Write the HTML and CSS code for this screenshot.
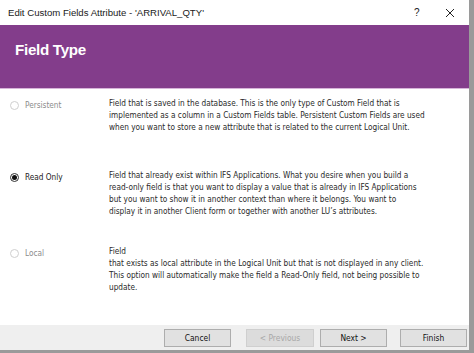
FILE: index.html
```html
<!DOCTYPE html>
<html>
<head>
<meta charset="utf-8">
<link rel="stylesheet" href="styles.css">
</head>
<body>
<div class="window">
  <div class="titlebar">
    <span class="title">Edit Custom Fields Attribute - 'ARRIVAL_QTY'</span>
    <span class="tb-help">?</span>
    <span class="tb-close">
      <svg width="10" height="10" viewBox="0 0 10 10"><path d="M1 1 L9 9 M9 1 L1 9" stroke="#222" stroke-width="1" fill="none"/></svg>
    </span>
  </div>
  <div class="header"><span class="header-title">Field Type</span></div>
  <div class="content">
    <div class="row row-1">
      <div class="opt disabled"><span class="radio"></span><span class="lbl">Persistent</span></div>
      <div class="desc">Field that is saved in the database. This is the only type of Custom Field that is<br>implemented as a column in a Custom Fields table. Persistent Custom Fields are used<br>when you want to store a new attribute that is related to the current Logical Unit.</div>
    </div>
    <div class="row row-2">
      <div class="opt"><span class="radio checked"></span><span class="lbl">Read Only</span></div>
      <div class="desc">Field that already exist within IFS Applications. What you desire when you build a<br>read-only field is that you want to display a value that is already in IFS Applications<br>but you want to show it in another context than where it belongs. You want to<br>display it in another Client form or together with another LU’s attributes.</div>
    </div>
    <div class="row row-3">
      <div class="opt disabled"><span class="radio"></span><span class="lbl">Local</span></div>
      <div class="desc">Field<br>that exists as local attribute in the Logical Unit but that is not displayed in any client.<br>This option will automatically make the field a Read-Only field, not being possible to<br>update.</div>
    </div>
  </div>
  <div class="footer">
    <button class="btn btn-cancel">Cancel</button>
    <button class="btn btn-prev" disabled>&lt; Previous</button>
    <button class="btn btn-next">Next &gt;</button>
    <button class="btn btn-finish">Finish</button>
  </div>
</div>
</body>
</html>
```
FILE: styles.css
```css
html, body { margin: 0; padding: 0; }
body {
  width: 474px;
  height: 353px;
  background: #9a9a9a;
  overflow: hidden;
  font-family: "Liberation Sans", Arial, sans-serif;
}
.window {
  width: 469px;
  height: 350px;
  display: flex;
  flex-direction: column;
  background: #fff;
}
.titlebar {
  height: 25px;
  flex: none;
  display: flex;
  align-items: center;
  background: #fff;
}
.title {
  font-size: 9.6px;
  color: #1a1a1a;
  padding-left: 8px;
  flex: 1;
  white-space: nowrap;
}
.tb-help {
  font-size: 10px;
  color: #222;
  width: 10px;
  margin-right: 21px;
}
.tb-close {
  display: flex;
  margin-right: 14px;
}
.header {
  height: 64px;
  flex: none;
  background: #833d8b;
  border-bottom: 1px solid #d7b4d9;
  box-sizing: border-box;
  padding: 16px 0 0 15px;
}
.header-title {
  color: #fff;
  font-weight: bold;
  font-size: 15.2px;
  letter-spacing: -0.3px;
}
.content {
  flex: 1;
  padding-top: 8px;
}
.row {
  display: grid;
  grid-template-columns: 109px 1fr;
}
.row-1 { height: 72px; }
.row-2 { height: 76px; }
.opt {
  display: flex;
  align-items: center;
  padding-left: 10px;
  height: 12px;
  margin-top: 2px;
  font-family: "DejaVu Sans", sans-serif;
  font-stretch: condensed;
  font-size: 8.2px;
  color: #222;
}
.opt.disabled { color: #8c8c8c; }
.radio {
  width: 9px;
  height: 9px;
  border: 1px solid #333;
  border-radius: 50%;
  box-sizing: border-box;
  margin-right: 6px;
  display: flex;
  align-items: center;
  justify-content: center;
  background: #fff;
}
.opt.disabled .radio { border-color: #cfcfcf; }
.radio.checked::after {
  content: "";
  width: 5px;
  height: 5px;
  border-radius: 50%;
  background: #111;
}
.desc {
  font-family: "DejaVu Sans", sans-serif;
  font-stretch: condensed;
  font-size: 8.2px;
  line-height: 12px;
  color: #2a2a2a;
  white-space: nowrap;
}
.footer {
  height: 25px;
  flex: none;
  background: #efefef;
  display: flex;
  align-items: center;
  padding-left: 164px;
}
.btn {
  width: 67px;
  height: 18px;
  box-sizing: border-box;
  border: 1px solid #adadad;
  background: #e1e1e1;
  font-family: "DejaVu Sans", sans-serif;
  font-stretch: condensed;
  font-size: 8.4px;
  color: #111;
  padding: 0;
}
.btn:disabled {
  color: #a8a8a8;
  border-color: #cfcfcf;
  background: #dcdcdc;
}
.btn-prev { margin-left: 15px; width: 68px; }
.btn-next { margin-left: 6px; }
.btn-finish { margin-left: 13px; }
```
